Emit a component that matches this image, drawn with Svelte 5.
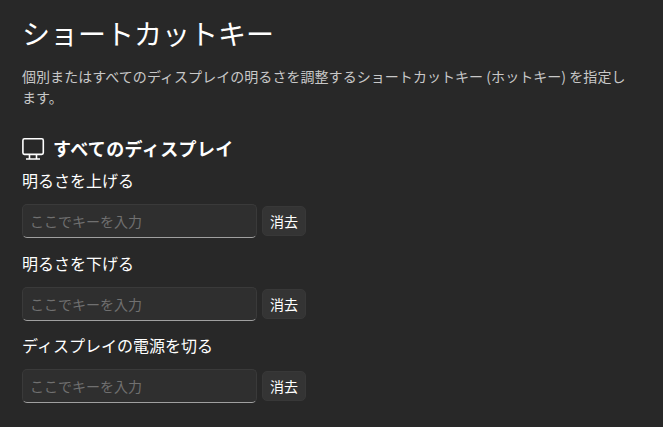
<script>
  const rows = ['明るさを上げる', '明るさを下げる', 'ディスプレイの電源を切る'];
</script>

<main class="page">
  <h1>ショートカットキー</h1>
  <p class="desc">個別またはすべてのディスプレイの明るさを調整するショートカットキー (ホットキー) を指定します。</p>
  <h2>
    <svg width="24" height="24" viewBox="0 0 24 24" fill="none" stroke="#fff" stroke-width="1.6">
      <rect x="0.9" y="2.8" width="20.4" height="15.6" rx="1.6" />
      <path d="M4 23h14M7.5 18.5V23M14.5 18.5V23" />
    </svg>
    <span class="h2-text">すべてのディスプレイ</span>
  </h2>
  <div class="rows">
    {#each rows as label}
      <div class="row">
        <div class="label">{label}</div>
        <div class="controls">
          <input placeholder="ここでキーを入力" />
          <button>消去</button>
        </div>
      </div>
    {/each}
  </div>
</main>

<style>
  :global(body) {
    margin: 0;
    background: #282828;
    color: #fff;
    font-family: "Noto Sans CJK JP", "Open Sans", sans-serif;
    overflow: hidden;
  }
  .page { height: 427px; padding: 0 22px; box-sizing: border-box; overflow: hidden; }
  h1 { margin: 0; padding-top: 12px; font-size: 28px; line-height: 42px; font-weight: 400; }
  .desc { margin: 12px 0 0; width: 610px; font-size: 14px; line-height: 21px; letter-spacing: 0.05px; color: #c8c8c8; }
  h2 { margin: 26px 0 0; display: flex; align-items: center; gap: 9px; font-size: 18px; line-height: 28px; font-weight: 700; }
  .h2-text { letter-spacing: 0.4px; margin-left: -2px; }
  .rows { display: flex; flex-direction: column; margin-top: 7px; }
  .row { height: 82.5px; }
  .label { font-size: 16px; line-height: 22px; }
  .controls { display: flex; align-items: center; gap: 5px; margin-top: 13px; }
  input {
    width: 235px; height: 34px; box-sizing: border-box; padding: 0 7px;
    background: #2f2f2f; border: 1px solid #3a3a3a; border-bottom-color: #a0a0a0;
    border-radius: 5px; color: #fff; font: inherit; font-size: 14px;
  }
  input::placeholder { color: #707070; opacity: 1; }
  button {
    width: 44px; height: 30px; padding: 0;
    background: #343434; border: 1px solid #383838; border-radius: 5px;
    color: #fff; font: inherit; font-size: 14px;
  }
</style>
